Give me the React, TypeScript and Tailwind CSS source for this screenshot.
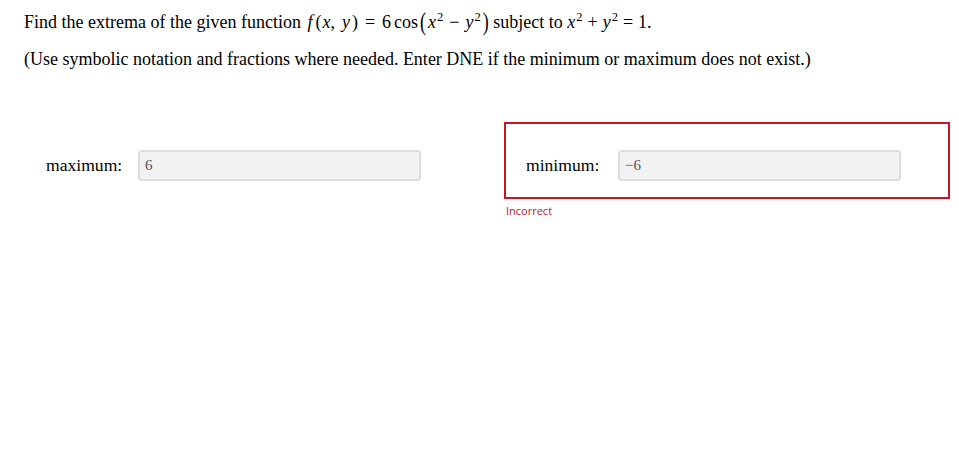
const serif = { fontFamily: '"Liberation Serif", "Times New Roman", serif' };

function Sup({ children }: { children: React.ReactNode }) {
  return <sup className="text-[12.5px] -top-[7px] not-italic ml-[1px]">{children}</sup>;
}

function AnswerBox({ label, value, incorrect }: { label: string; value: string; incorrect?: boolean }) {
  return (
    <div className="w-[446px]">
      <div
        className={`h-[77px] flex items-center pl-[20px] pt-[10px] border-2 ${
          incorrect ? 'border-[#cc1424]' : 'border-transparent'
        }`}
      >
        <span className="text-[17.6px] text-black w-[92px]" style={serif}>
          {label}
        </span>
        <div className="w-[283px] h-[31px] rounded-[4px] border-2 border-[#dddddd] bg-[#f2f2f2] flex items-center pl-[5px]">
          <span className="text-[15px] text-[#555555]" style={serif}>
            {value}
          </span>
        </div>
      </div>
      {incorrect && (
        <div
          className="text-[11px] text-[#cc1424] pl-[2px] pt-[4px]"
          style={{ fontFamily: '"Open Sans", "Noto Sans", sans-serif' }}
        >
          Incorrect
        </div>
      )}
    </div>
  );
}

export default function App() {
  return (
    <div className="w-[959px] h-[449px] bg-white pl-[24px] pt-[10px]" style={serif}>
      <p className="text-[18px] leading-[25px] text-black whitespace-nowrap">
        Find the extrema of the given function{' '}
        <span className="italic ml-[2px]">f</span>
        <span className="ml-[3px]">(</span>
        <span className="italic ml-[1px]">x</span>,
        <span className="italic ml-[7px]">y</span>
        <span className="ml-[2px]">)</span>
        <span className="mx-[7px]">=</span>6
        <span className="ml-[3px]">cos</span>
        <span className="inline-block scale-y-[1.35] ml-[2px] mr-[2px]">(</span>
        <span className="italic">x</span>
        <Sup>2</Sup>
        <span className="mx-[6px]">−</span>
        <span className="italic">y</span>
        <Sup>2</Sup>
        <span className="inline-block scale-y-[1.35] ml-[2px]">)</span> subject to{' '}
        <span className="italic">x</span>
        <Sup>2</Sup>
        <span className="mx-[5px]">+</span>
        <span className="italic">y</span>
        <Sup>2</Sup>
        <span className="mx-[5px]">=</span>1.
      </p>
      <p className="text-[18px] leading-[25px] text-black mt-[12px] whitespace-nowrap">
        (Use symbolic notation and fractions where needed. Enter DNE if the minimum or maximum does not exist.)
      </p>
      <div className="flex gap-[34px] mt-[50px]">
        <AnswerBox label="maximum:" value="6" />
        <AnswerBox label="minimum:" value="−6" incorrect />
      </div>
    </div>
  );
}
